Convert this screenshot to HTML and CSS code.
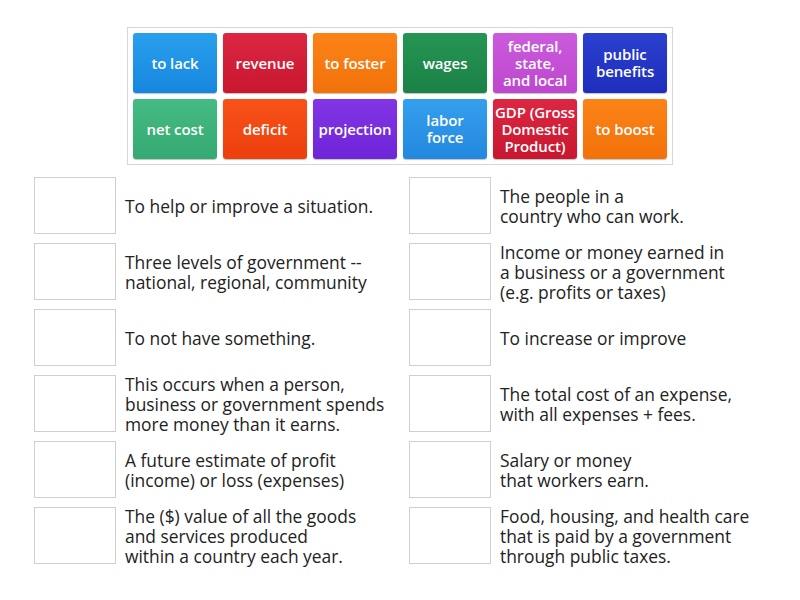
FILE: index.html
```html
<!DOCTYPE html>
<html>
<head>
<meta charset="utf-8">
<link rel="stylesheet" href="styles.css">
</head>
<body>
<div class="page">
  <div class="bank">
    <div class="tile c-blue">to lack</div>
    <div class="tile c-crimson">revenue</div>
    <div class="tile c-orange">to foster</div>
    <div class="tile c-green">wages</div>
    <div class="tile c-magenta">federal,<br>state,<br>and local</div>
    <div class="tile c-navy">public<br>benefits</div>
    <div class="tile c-teal">net cost</div>
    <div class="tile c-red">deficit</div>
    <div class="tile c-purple">projection</div>
    <div class="tile c-sky">labor<br>force</div>
    <div class="tile c-crimson">GDP (Gross<br>Domestic<br>Product)</div>
    <div class="tile c-orange">to boost</div>
  </div>
  <div class="pairs">
    <div class="row"><div class="slot"></div><div class="def">To help or improve a situation.</div></div>
    <div class="row"><div class="slot"></div><div class="def">The people in a<br>country who can work.</div></div>
    <div class="row"><div class="slot"></div><div class="def">Three levels of government --<br>national, regional, community</div></div>
    <div class="row"><div class="slot"></div><div class="def">Income or money earned in<br>a business or a government<br>(e.g. profits or taxes)</div></div>
    <div class="row"><div class="slot"></div><div class="def">To not have something.</div></div>
    <div class="row"><div class="slot"></div><div class="def">To increase or improve</div></div>
    <div class="row"><div class="slot"></div><div class="def">This occurs when a person,<br>business or government spends<br>more money than it earns.</div></div>
    <div class="row"><div class="slot"></div><div class="def">The total cost of an expense,<br>with all expenses + fees.</div></div>
    <div class="row"><div class="slot"></div><div class="def">A future estimate of profit<br>(income) or loss (expenses)</div></div>
    <div class="row"><div class="slot"></div><div class="def">Salary or money<br>that workers earn.</div></div>
    <div class="row"><div class="slot"></div><div class="def">The ($) value of all the goods<br>and services produced<br>within a country each year.</div></div>
    <div class="row"><div class="slot"></div><div class="def">Food, housing, and health care<br>that is paid by a government<br>through public taxes.</div></div>
  </div>
</div>
</body>
</html>
```
FILE: styles.css
```css
html, body {
  margin: 0;
  padding: 0;
  background: #ffffff;
}
.page {
  width: 800px;
  height: 600px;
  padding-top: 27px;
  box-sizing: border-box;
  font-family: "Open Sans", Lato, sans-serif;
}
.bank {
  width: 534px;
  margin: 0 auto;
  padding: 5px;
  border: 1px solid #d6d6d6;
  display: grid;
  grid-template-columns: repeat(6, 84px);
  grid-auto-rows: 60px;
  gap: 6px;
}
.tile {
  border-radius: 3px;
  color: #ffffff;
  font-weight: 600;
  font-size: 15px;
  line-height: 17px;
  letter-spacing: -0.1px;
  text-align: center;
  display: flex;
  align-items: center;
  justify-content: center;
  box-shadow: 0 1px 1px rgba(0,0,0,0.25);
}
.c-blue { background: linear-gradient(#2aa0ec, #1686df); }
.c-crimson { background: linear-gradient(#dc2742, #c8172f); }
.c-orange { background: linear-gradient(#fb8318, #f2720a); }
.c-green { background: linear-gradient(#259553, #1b8146); }
.c-magenta { background: linear-gradient(#cb5bdc, #bd47cf); }
.c-navy { background: linear-gradient(#2a3fd0, #1f2ebc); }
.c-teal { background: linear-gradient(#45bb84, #35a971); }
.c-red { background: linear-gradient(#f8521a, #ec3f0c); }
.c-purple { background: linear-gradient(#8235e4, #6e25d8); }
.c-sky { background: linear-gradient(#359fed, #2388df); }
.pairs {
  margin-top: 12px;
  padding-left: 34px;
  display: grid;
  grid-template-columns: 366px 366px;
  grid-auto-rows: 57px;
  column-gap: 9px;
  row-gap: 9px;
}
.row {
  display: flex;
  align-items: center;
  gap: 9px;
  height: 57px;
}
.slot {
  flex: none;
  width: 80px;
  height: 55px;
  border: 1px solid #cfcfcf;
  background: #ffffff;
}
.def {
  font-size: 17.4px;
  line-height: 20px;
  color: #222222;
  white-space: nowrap;
}
```
